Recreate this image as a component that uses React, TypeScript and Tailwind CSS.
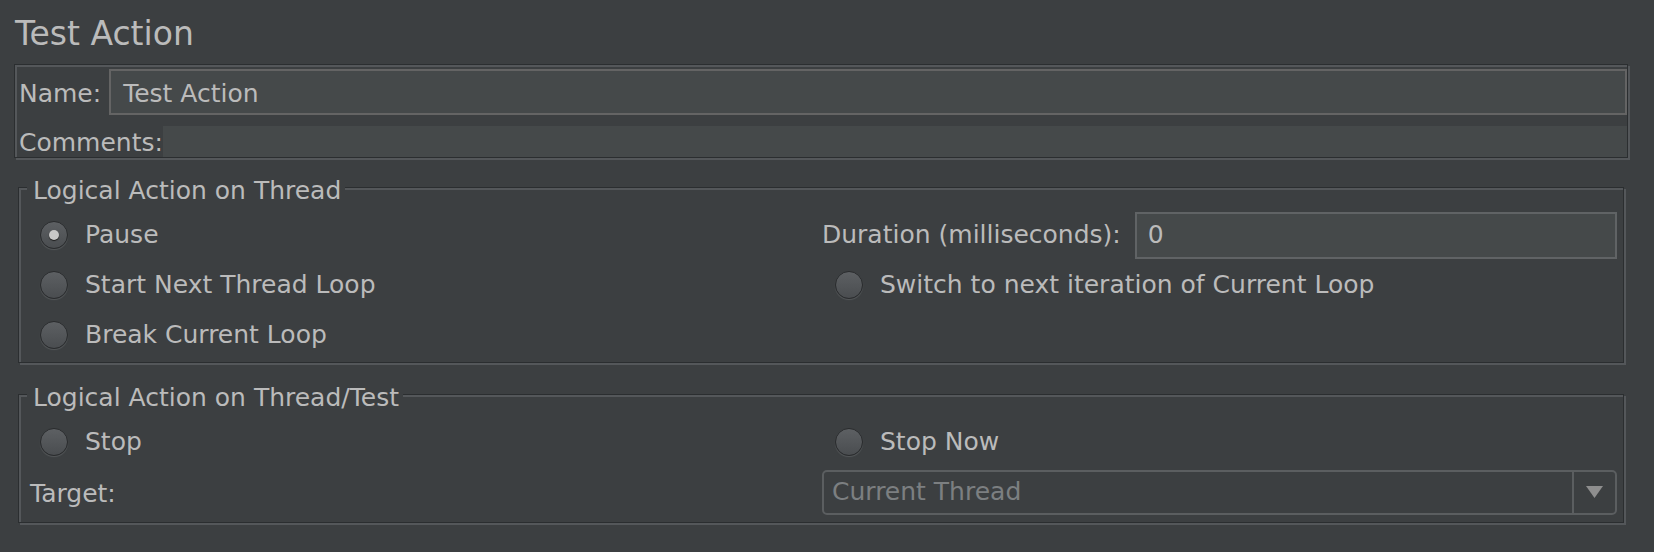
import React from "react";

function Radio({ checked = false }: { checked?: boolean }) {
  return (
    <span className="flex h-[28px] w-[28px] shrink-0 items-center justify-center rounded-full border-[1.5px] border-[#2a2c2e] bg-linear-to-b from-[#5d6063] to-[#4a4d50] shadow-[0_1px_1px_#55585a]">
      {checked && (
        <span className="h-[10px] w-[10px] rounded-full bg-[#c8c8c8] shadow-[0_1px_1px_#1c1c1c]" />
      )}
    </span>
  );
}

function RadioOption({ label, checked }: { label: string; checked?: boolean }) {
  return (
    <label className="ml-[13px] flex items-center">
      <Radio checked={checked} />
      <span className="ml-[17px]">{label}</span>
    </label>
  );
}

function Group({ title, children }: { title: string; children: React.ReactNode }) {
  return (
    <fieldset className="ml-[4px] mr-[4px] min-w-0 border border-[#2b2e30] pb-[2px] pl-[8px] pr-[6px] pt-[4px] shadow-[inset_2px_2px_0_#54575a,2px_2px_0_#54575a]">
      <legend className="bg-[#3c3f41] pl-[6px] pr-[4px] pt-[8px] leading-[30px]">{title}</legend>
      {children}
    </fieldset>
  );
}

export default function App() {
  return (
    <div className="h-[552px] w-[1654px] overflow-hidden bg-[#3c3f41] pl-[14px] pr-[26px] pt-[14px] font-['DejaVu_Sans',sans-serif] text-[25px] leading-[30px] text-[#bbbbbb]">
      <h1 className="pl-[1px] text-[33px] font-normal leading-[40px]">Test Action</h1>

      {/* Name / Comments */}
      <div className="mt-[10px] border border-[#2b2e30] pl-[4px] shadow-[inset_2px_2px_0_#54575a,2px_2px_0_#54575a]">
        <div className="mt-[4px] flex h-[46px] items-center">
          <span className="mr-[8px] pt-[3px]">Name:</span>
          <div className="flex h-full flex-1 items-center border-2 border-[#646464] bg-[#45494a] pl-[12px] pt-[3px]">
            Test Action
          </div>
        </div>
        <div className="mt-[11px] flex h-[31px] items-center">
          <span className="pt-[3px]">Comments:</span>
          <div className="h-full flex-1 bg-[#45494a]" />
        </div>
      </div>

      <div className="mt-[10px]">
        <Group title="Logical Action on Thread">
          <div className="grid grid-cols-2">
            <div className="flex h-[50px] items-center">
              <RadioOption label="Pause" checked />
            </div>
            <div className="flex h-[50px] items-center">
              <span>Duration (milliseconds):</span>
              <div className="ml-[14px] flex h-[47px] flex-1 items-center border-2 border-[#606365] bg-[#45494a] pl-[11px]">
                0
              </div>
            </div>
            <div className="flex h-[50px] items-center">
              <RadioOption label="Start Next Thread Loop" />
            </div>
            <div className="flex h-[50px] items-center">
              <RadioOption label="Switch to next iteration of Current Loop" />
            </div>
            <div className="flex h-[50px] items-center">
              <RadioOption label="Break Current Loop" />
            </div>
            <div className="h-[50px]" />
          </div>
        </Group>
      </div>

      <div className="mt-[12px]">
        <Group title="Logical Action on Thread/Test">
          <div className="grid grid-cols-2 pb-[3px]">
            <div className="flex h-[50px] items-center">
              <RadioOption label="Stop" />
            </div>
            <div className="flex h-[50px] items-center">
              <RadioOption label="Stop Now" />
            </div>
            <div className="flex h-[50px] items-center pl-[3px]">
              <span className="pt-[4px]">Target:</span>
            </div>
            <div className="flex h-[50px] items-center">
              <div className="flex h-[45px] flex-1 rounded-[5px] border-2 border-[#5b5e60]">
                <div className="flex flex-1 items-center pl-[8px] text-[#7c7f81]">Current Thread</div>
                <div className="flex w-[43px] items-center justify-center border-l-2 border-[#5b5e60]">
                  <svg width="17" height="12" viewBox="0 0 17 12" aria-hidden="true">
                    <path d="M0 0H17L8.5 12Z" fill="#8e8e8e" />
                  </svg>
                </div>
              </div>
            </div>
          </div>
        </Group>
      </div>
    </div>
  );
}
